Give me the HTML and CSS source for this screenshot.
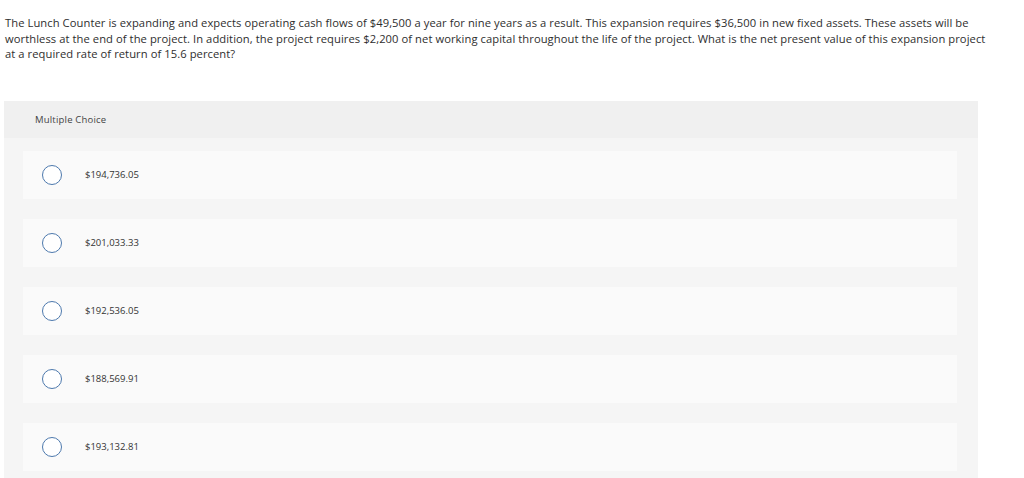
FILE: index.html
```html
<!DOCTYPE html>
<html>
<head>
<meta charset="utf-8">
<link rel="stylesheet" href="styles.css">
</head>
<body>
<div class="page">
  <p class="question">The Lunch Counter is expanding and expects operating cash flows of $49,500 a year for nine years as a result. This expansion requires $36,500 in new fixed assets. These assets will be worthless at the end of the project. In addition, the project requires $2,200 of net working capital throughout the life of the project. What is the net present value of this expansion project at a required rate of return of 15.6 percent?</p>
  <div class="panel">
    <div class="panel-head">Multiple Choice</div>
    <div class="options">
      <div class="option"><span class="radio"></span><span class="label">$194,736.05</span></div>
      <div class="option"><span class="radio"></span><span class="label">$201,033.33</span></div>
      <div class="option"><span class="radio"></span><span class="label">$192,536.05</span></div>
      <div class="option"><span class="radio"></span><span class="label">$188,569.91</span></div>
      <div class="option"><span class="radio"></span><span class="label">$193,132.81</span></div>
    </div>
  </div>
</div>
</body>
</html>
```
FILE: styles.css
```css
html, body {
  margin: 0;
  padding: 0;
  background: #ffffff;
}
body {
  font-family: "Open Sans", Lato, sans-serif;
  color: #333333;
}
.page {
  padding: 15px 38px 0 4px;
}
.question {
  margin: 0 0 39px 1px;
  font-size: 11.2px;
  letter-spacing: 0.07px;
  line-height: 15.5px;
  color: #2e2e2e;
}
.panel {
  background: #f5f5f5;
  width: 974px;
  padding-bottom: 10px;
}
.panel-head {
  background: #f0f0f0;
  height: 37px;
  display: flex;
  align-items: center;
  padding-left: 31px;
  font-size: 9.5px;
  letter-spacing: 0.2px;
  color: #444444;
}
.options {
  display: flex;
  flex-direction: column;
  gap: 20px;
  padding: 13px 21px 0 19px;
}
.option {
  background: #fafafa;
  height: 48px;
  display: flex;
  align-items: center;
  padding-left: 19px;
}
.radio {
  width: 18px;
  height: 18px;
  border: 1.5px solid #4d79ad;
  border-radius: 50%;
  background: #ffffff;
  flex: none;
}
.label {
  margin-left: 23px;
  font-size: 9.5px;
  color: #333333;
}
```
